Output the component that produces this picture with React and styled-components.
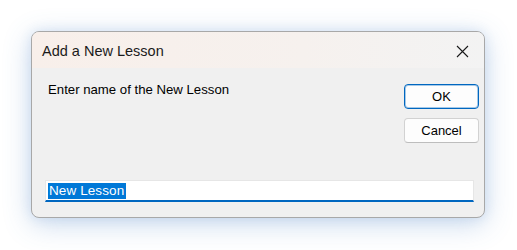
import React from "react";
import styled, { createGlobalStyle } from "styled-components";

const Global = createGlobalStyle`
  html, body { margin: 0; padding: 0; background: #ffffff; }
  body { font-family: "Liberation Sans", Arial, sans-serif; }
  * { box-sizing: border-box; }
`;

const Page = styled.div`
  width: 517px;
  height: 250px;
  padding: 31px 0 0 31px;
  background: #ffffff;
  overflow: hidden;
`;

const Window = styled.div`
  width: 454px;
  height: 187px;
  border: 1px solid #a8a8a8;
  border-radius: 8px;
  overflow: hidden;
  display: flex;
  flex-direction: column;
  background: #f0f0f0;
  box-shadow: 0 6px 28px rgba(70, 125, 195, 0.3), 0 0 12px rgba(70, 125, 195, 0.14);
`;

const TitleBar = styled.div`
  height: 36px;
  flex: none;
  display: flex;
  align-items: center;
  justify-content: space-between;
  padding-left: 10px;
  background: linear-gradient(90deg, #f8efea 0%, #f6f1ee 60%, #f3f3f3 100%);
`;

const Title = styled.div`
  font-family: "Liberation Sans", Arial, sans-serif;
  font-size: 14.5px;
  color: #1b1b1b;
  margin-top: 1px;
`;

const CloseButton = styled.div`
  width: 43px;
  height: 36px;
  display: flex;
  align-items: center;
  justify-content: center;
  margin-top: 2px;
`;

const Main = styled.div`
  flex: 1;
  display: flex;
  flex-direction: column;
  padding: 16px 5px 15px 13px;
`;

const TopRow = styled.div`
  display: flex;
  justify-content: space-between;
  align-items: flex-start;
`;

const Label = styled.div`
  font-family: "Liberation Sans", Arial, sans-serif;
  font-size: 13.2px;
  color: #000;
  margin-left: 3px;
  margin-top: -2px;
`;

const Buttons = styled.div`
  display: flex;
  flex-direction: column;
  gap: 9px;
  width: 75px;
`;

const Button = styled.div`
  height: 25px;
  border-radius: 4px;
  background: #fdfdfd;
  display: flex;
  align-items: center;
  justify-content: center;
  font-family: "Liberation Sans", Arial, sans-serif;
  font-size: 13px;
  color: #000;
  border: 1px solid ${(p) => (p.$primary ? "#0067c0" : "#d2d2d2")};
  border-bottom-color: ${(p) => (p.$primary ? "#0067c0" : "#bdbdbd")};
  box-shadow: ${(p) => (p.$primary ? "inset 0 0 0 1px rgba(0,103,192,0.35)" : "none")};
`;

const InputBox = styled.div`
  margin-top: auto;
  width: 429px;
  height: 22px;
  background: #ffffff;
  border: 1px solid #e6e6e6;
  border-bottom: 2px solid #0067c0;
  padding: 2px 0 0 2px;
  display: flex;
  align-items: flex-start;
`;

const Selected = styled.span`
  background: #0078d7;
  color: #ffffff;
  font-family: "Liberation Sans", Arial, sans-serif;
  font-size: 13.5px;
  line-height: 16px;
  height: 16px;
  padding: 0 2px 0 1px;
  letter-spacing: 0.1px;
`;

export default function App() {
  return (
    <>
      <Global />
      <Page>
        <Window>
          <TitleBar>
            <Title>Add a New Lesson</Title>
            <CloseButton>
              <svg width="13" height="13" viewBox="0 0 13 13">
                <path d="M1 1 L12 12 M12 1 L1 12" stroke="#1a1a1a" strokeWidth="1.1" fill="none" />
              </svg>
            </CloseButton>
          </TitleBar>
          <Main>
            <TopRow>
              <Label>Enter name of the New Lesson</Label>
              <Buttons>
                <Button $primary>OK</Button>
                <Button>Cancel</Button>
              </Buttons>
            </TopRow>
            <InputBox>
              <Selected>New Lesson</Selected>
            </InputBox>
          </Main>
        </Window>
      </Page>
    </>
  );
}
